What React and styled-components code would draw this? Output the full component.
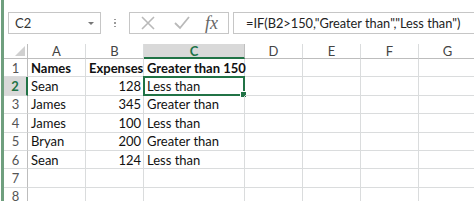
import { Fragment } from "react"
import styled, { createGlobalStyle } from "styled-components"

const Global = createGlobalStyle`
    html, body {
        margin: 0;
        padding: 0;
        background: #fff;
    }
    body {
        font-family: Lato, "Open Sans", sans-serif;
        overflow: hidden;
    }
`

const GREEN = "#217346"
const GRID = "#dadcdd"

const Page = styled.div`
    display: flex;
    width: 474px;
    height: 201px;
    overflow: hidden;
    background: #fff;
    `
const Stripe = styled.div`
    flex: 0 0 3px;
    margin-left: 1px;
    background: #6f9f7e;
    `
const Main = styled.div`
    flex: 1;
    display: flex;
    flex-direction: column;
    padding-top: 3px;
    `
const TopLine = styled.div`
    height: 1px;
    background: #d6d6d6;
    `
const Toolbar = styled.div`
    display: flex;
    align-items: center;
    height: 22px;
    margin: 9px 0 10px 4px;
    `
const NameBox = styled.div`
    box-sizing: border-box;
    width: 93px;
    height: 22px;
    border: 1px solid #c6c6c6;
    display: flex;
    align-items: center;
    justify-content: space-between;
    padding: 0 6px 0 6px;
    font-size: 13px;
    color: #333;
    `
const Caret = styled.span`
    width: 0;
    height: 0;
    border-left: 3px solid transparent;
    border-right: 3px solid transparent;
    border-top: 3px solid #777;
    `
const Dots = styled.div`
    width: 28px;
    display: flex;
    flex-direction: column;
    align-items: center;
    gap: 2px;
    span {
        width: 1.5px;
        height: 1.5px;
        background: #9a9a9a;
    }
    `
const FuncBox = styled.div`
    box-sizing: border-box;
    width: 100px;
    height: 22px;
    border: 1px solid #c6c6c6;
    display: flex;
    align-items: center;
    padding-left: 11px;
    gap: 19px;
    `
const Fx = styled.span`
    font-family: "Liberation Serif", serif;
    font-style: italic;
    font-size: 18px;
    color: #666;
    margin-left: -4px;
    line-height: 1;
    `
const FormulaBox = styled.div`
    box-sizing: border-box;
    flex: 1;
    height: 22px;
    margin-left: 4px;
    margin-right: -4px;
    border: 1px solid #c6c6c6;
    display: flex;
    align-items: center;
    padding-left: 12px;
    font-size: 12.8px;
    color: #222;
    white-space: nowrap;
    `
const Grid = styled.div`
    display: grid;
    grid-template-columns: 24px 58px 58px 101px 58px 58px 58px 58px;
    grid-template-rows: 15px repeat(8, 18.4px);
    `
const HeadCell = styled.div`
    box-sizing: border-box;
    display: flex;
    align-items: center;
    justify-content: center;
    font-size: 13px;
    color: ${p => p.$active ? GREEN : "#444"};
    font-weight: ${p => p.$active ? 700 : 400};
    background: ${p => p.$active ? "#d9d9d9" : "#fff"};
    border-right: 1px solid ${p => p.$active ? "#bfbfbf" : GRID};
    border-bottom: ${p => p.$active ? `2px solid ${GREEN}` : "1px solid #bdbdbd"};
    `
const Corner = styled.div`
    box-sizing: border-box;
    position: relative;
    border-right: 1px solid #bdbdbd;
    border-bottom: 1px solid #bdbdbd;
    &::after {
        content: "";
        position: absolute;
        right: 2px;
        bottom: 2px;
        width: 0;
        height: 0;
        border-left: 10px solid transparent;
        border-bottom: 10px solid #d0d0d0;
    }
    `
const RowHead = styled.div`
    box-sizing: border-box;
    display: flex;
    align-items: center;
    justify-content: center;
    font-size: 13px;
    color: ${p => p.$active ? GREEN : "#555"};
    font-weight: ${p => p.$active ? 700 : 400};
    background: ${p => p.$active ? "#d9d9d9" : "#fff"};
    border-bottom: 1px solid ${GRID};
    border-right: ${p => p.$active ? `2px solid ${GREEN}` : "1px solid #bdbdbd"};
    `
const Cell = styled.div`
    box-sizing: border-box;
    position: relative;
    display: flex;
    align-items: center;
    justify-content: ${p => p.$num ? "flex-end" : "flex-start"};
    padding: 0 2px 0 3px;
    font-size: 13px;
    font-weight: ${p => p.$bold ? 700 : 400};
    color: #111;
    white-space: nowrap;
    border-right: 1px solid ${GRID};
    border-bottom: 1px solid ${GRID};
    `
const Selection = styled.div`
    position: absolute;
    left: -1px;
    top: -1px;
    right: -1px;
    bottom: -1px;
    border: 2px solid ${GREEN};
    pointer-events: none;
    &::after {
        content: "";
        position: absolute;
        right: -4px;
        bottom: -4px;
        width: 5px;
        height: 5px;
        background: ${GREEN};
        border: 1px solid #fff;
    }
    `

const rows = [
    ["Names", "Expenses", "Greater than 150"],
    ["Sean", "128", "Less than"],
    ["James", "345", "Greater than"],
    ["James", "100", "Less than"],
    ["Bryan", "200", "Greater than"],
    ["Sean", "124", "Less than"],
    ["", "", ""],
    ["", "", ""],
]

const cols = ["A", "B", "C", "D", "E", "F", "G"]

function CancelIcon() {
    return (
        <svg width="14" height="14" viewBox="0 0 14 14">
            <path d="M1 1 L13 13 M13 1 L1 13" stroke="#b9b9b9" strokeWidth="1.6" fill="none" />
        </svg>
    )
}

function CheckIcon() {
    return (
        <svg width="16" height="14" viewBox="0 0 16 14">
            <path d="M1 7 L6 12 L15 1" stroke="#b9b9b9" strokeWidth="1.8" fill="none" />
        </svg>
    )
}

export default function App() {
    return (
        <Page>
            <Global />
            <Stripe />
            <Main>
                <TopLine />
                <Toolbar>
                    <NameBox>
                        <span>C2</span>
                        <Caret />
                    </NameBox>
                    <Dots><span /><span /><span /></Dots>
                    <FuncBox>
                        <CancelIcon />
                        <CheckIcon />
                        <Fx>fx</Fx>
                    </FuncBox>
                    <FormulaBox>=IF(B2&gt;150,"Greater than","Less than")</FormulaBox>
                </Toolbar>
                <Grid>
                    <Corner />
                    {cols.map(c => (
                        <HeadCell key={c} $active={c === "C"}>{c}</HeadCell>
                    ))}
                    {rows.map((r, i) => (
                        <Fragment key={i}>
                            <RowHead $active={i === 1}>{i + 1}</RowHead>
                            <Cell $bold={i === 0}>{r[0]}</Cell>
                            <Cell $bold={i === 0} $num={i > 0}>{r[1]}</Cell>
                            <Cell $bold={i === 0}>
                                {r[2]}
                                {i === 1 && <Selection />}
                            </Cell>
                            <Cell />
                            <Cell />
                            <Cell />
                            <Cell />
                        </Fragment>
                    ))}
                </Grid>
            </Main>
        </Page>
    )
}
